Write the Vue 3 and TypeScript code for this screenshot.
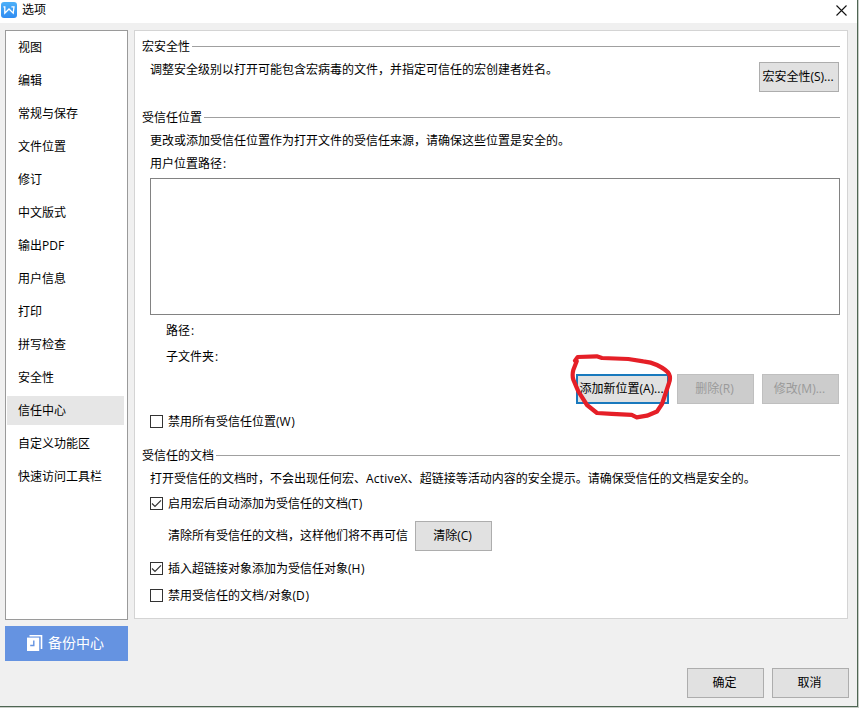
<script setup lang="ts">
import { ref } from 'vue'

const categories: string[] = [
  '视图', '编辑', '常规与保存', '文件位置', '修订', '中文版式', '输出PDF',
  '用户信息', '打印', '拼写检查', '安全性', '信任中心', '自定义功能区', '快速访问工具栏',
]
const active = ref('信任中心')
const disableLocations = ref(false)
const autoTrust = ref(true)
const trustLinks = ref(true)
const disableDocs = ref(false)
</script>

<template>
  <div class="window">
    <header class="titlebar">
      <svg class="logo" viewBox="0 0 16 16">
        <defs>
          <linearGradient id="logo-fill" x1="0" y1="0" x2="0" y2="1">
            <stop offset="0" stop-color="#4db0f8" />
            <stop offset="1" stop-color="#2f8cf2" />
          </linearGradient>
        </defs>
        <rect width="16" height="16" rx="3" fill="url(#logo-fill)" />
        <path d="M2.4 4.8H3.8V11.2L8 7L12.2 11.2L13 4.8H10.4" fill="none" stroke="#fff" stroke-width="1.3" />
      </svg>
      <span class="title">选项</span>
      <svg class="close" viewBox="0 0 11 11"><path d="M.5 .5L10.5 10.5M10.5 .5L.5 10.5" fill="none" stroke="#111" stroke-width="1.1" /></svg>
    </header>

    <div class="body">
      <aside class="side">
        <nav class="categories">
          <div
            v-for="c in categories"
            :key="c"
            class="category"
            :class="{ active: c === active }"
            @click="active = c"
          >{{ c }}</div>
        </nav>
        <button class="backup">
          <svg class="backup-icon" viewBox="0 0 16 16">
            <path d="M2.5 .8H14.5V14" fill="none" stroke="#fff" stroke-width="1.6" />
            <path d="M0 2.6H12.2V16H0Z" fill="#fff" />
            <path d="M6.8 5.5V10.5H3.2" fill="none" stroke="#6593e1" stroke-width="1.4" />
          </svg>
          <span>备份中心</span>
        </button>
      </aside>

      <main class="panel">
        <div class="heading">宏安全性</div>
        <div class="macro">
          <span class="text">调整安全级别以打开可能包含宏病毒的文件，并指定可信任的宏创建者姓名。</span>
          <button class="btn wide">宏安全性(S)...</button>
        </div>

        <div class="heading locations">受信任位置</div>
        <div class="text locations-desc">更改或添加受信任位置作为打开文件的受信任来源，请确保这些位置是安全的。</div>
        <div class="text list-label">用户位置路径<span class="colon">:</span></div>
        <div class="listbox"></div>
        <div class="text path">路径<span class="colon">:</span></div>
        <div class="text subfolder">子文件夹<span class="colon">:</span></div>
        <div class="actions">
          <div class="marked">
            <button class="btn primary">添加新位置(A)...</button>
            <svg class="scribble" viewBox="0 0 110 72">
              <path d="M5 10.7L7.7 7L26.7 6.3L32 8L58.3 9L73.3 11.3Q81 12 87 15Q97 20 99 24Q101 28 99 33L96.7 40L92 54L87 61.5L77 65.7L66.7 67.3L61.7 64.9L41.7 63.9L27 63L17 55L8.3 41.3L3.3 29.7Q2 25 3.3 20L6.7 11.3" />
            </svg>
          </div>
          <button class="btn" disabled>删除(R)</button>
          <button class="btn" disabled>修改(M)...</button>
        </div>
        <label class="check c1">
          <input v-model="disableLocations" type="checkbox">
          <span class="box"><svg v-if="disableLocations" viewBox="0 0 11 11"><path d="M1 5.5L4 8.5L10 2.3" /></svg></span>
          <span>禁用所有受信任位置(<span class="key">W</span>)</span>
        </label>

        <div class="heading docs">受信任的文档</div>
        <div class="text docs-desc">打开受信任的文档时，不会出现任何宏、<span class="latin">ActiveX</span>、超链接等活动内容的安全提示。请确保受信任的文档是安全的。</div>
        <label class="check c2">
          <input v-model="autoTrust" type="checkbox">
          <span class="box"><svg v-if="autoTrust" viewBox="0 0 11 11"><path d="M1 5.5L4 8.5L10 2.3" /></svg></span>
          <span>启用宏后自动添加为受信任的文档(<span class="key">T</span>)</span>
        </label>
        <div class="clear">
          <span>清除所有受信任的文档，这样他们将不再可信</span>
          <button class="btn">清除(C)</button>
        </div>
        <label class="check c3">
          <input v-model="trustLinks" type="checkbox">
          <span class="box"><svg v-if="trustLinks" viewBox="0 0 11 11"><path d="M1 5.5L4 8.5L10 2.3" /></svg></span>
          <span>插入超链接对象添加为受信任对象(<span class="key">H</span>)</span>
        </label>
        <label class="check c4">
          <input v-model="disableDocs" type="checkbox">
          <span class="box"><svg v-if="disableDocs" viewBox="0 0 11 11"><path d="M1 5.5L4 8.5L10 2.3" /></svg></span>
          <span>禁用受信任的文档/对象(<span class="key">D</span>)</span>
        </label>
      </main>
    </div>

    <footer class="footer">
      <button class="btn">确定</button>
      <button class="btn">取消</button>
    </footer>
  </div>
</template>

<style>
body {
  background: #c8cdc8;
  overflow: hidden;
}
</style>

<style scoped>
.window {
  box-sizing: border-box;
  width: 858px;
  height: 707px;
  display: flex;
  flex-direction: column;
  background: #f0f0f0;
  border-right: 1px solid #4f6653;
  border-bottom: 1px solid #4f6653;
  font: 12px/16px "Open Sans", "Noto Sans CJK SC", sans-serif;
  color: #000;
  white-space: nowrap;
}
.titlebar {
  display: flex;
  align-items: center;
  height: 23px;
  padding: 0 10px 0 1px;
  background: #fff;
}
.logo {
  width: 16px;
  height: 16px;
  margin-top: -3px;
}
.title {
  margin: -4px 0 0 5px;
}
.close {
  width: 11px;
  height: 11px;
  margin: -3px 0 0 auto;
}
.body {
  display: flex;
  gap: 6px;
  padding: 7px 9px 0 5px;
}
.side {
  width: 123px;
  display: flex;
  flex-direction: column;
  gap: 6px;
}
.categories {
  box-sizing: border-box;
  height: 590px;
  padding: 2px 3px 0 1px;
  border: 1px solid #9a9a9a;
  background: #fff;
}
.category {
  height: 29px;
  margin-bottom: 4px;
  padding-left: 11px;
  line-height: 30px;
}
.category.active {
  background: #e6e6e6;
}
.backup {
  display: flex;
  align-items: center;
  justify-content: center;
  gap: 5px;
  height: 35px;
  padding: 0 2px 1px 0;
  border: 0;
  background: #6593e1;
  color: #fff;
  font: 14px/20px "Open Sans", "Noto Sans CJK SC", sans-serif;
}
.backup-icon {
  width: 16px;
  height: 16px;
}
.panel {
  box-sizing: border-box;
  flex: 1;
  height: 589px;
  padding: 7px 7px 0;
  border: 1px solid #d4d4d4;
  background: #fff;
}
.heading {
  display: flex;
  align-items: center;
  gap: 2px;
  height: 17px;
}
.heading::after {
  content: "";
  flex: 1;
  height: 1px;
  background: #a0a0a0;
}
.text {
  height: 16px;
  padding-left: 8px;
}
.latin {
  letter-spacing: 0.2px;
}
.key {
  letter-spacing: 0.7px;
}
.colon {
  margin-left: 1px;
}
.macro {
  display: flex;
  justify-content: space-between;
  margin-top: 7px;
  padding-right: 1px;
}
.locations {
  margin-top: 17px;
}
.locations-desc {
  margin-top: 7px;
}
.list-label {
  margin-top: 7px;
}
.listbox {
  box-sizing: border-box;
  height: 137px;
  margin: 6px 0 0 8px;
  border: 1px solid #828282;
}
.path {
  margin-top: 8px;
  padding-left: 24px;
}
.subfolder {
  margin-top: 10px;
  padding-left: 24px;
}
.actions {
  display: flex;
  justify-content: flex-end;
  gap: 8px;
  margin-top: 9px;
  padding-right: 1px;
}
.marked {
  position: relative;
}
.scribble {
  position: absolute;
  left: -6px;
  top: -24px;
  width: 110px;
  height: 72px;
  pointer-events: none;
}
.scribble path {
  fill: none;
  stroke: #e51f27;
  stroke-width: 4.2;
  stroke-linecap: round;
  stroke-linejoin: round;
}
.btn {
  box-sizing: border-box;
  width: 77px;
  height: 30px;
  padding: 0 2px 1px 0;
  border: 1px solid #adadad;
  background: #e1e1e1;
  color: #000;
  font: inherit;
}
.btn.wide {
  width: 80px;
}
.btn.primary {
  width: 93px;
  border: 2px solid #1979bd;
}
.btn:disabled {
  border-color: #bfbfbf;
  background: #ccc;
  color: #9a9a9a;
}
.check {
  display: flex;
  align-items: center;
  gap: 5px;
  height: 17px;
  padding-left: 8px;
}
.check input {
  display: none;
}
.box {
  box-sizing: border-box;
  width: 13px;
  height: 13px;
  border: 1px solid #333;
}
.box svg {
  display: block;
  width: 11px;
  height: 11px;
}
.box path {
  fill: none;
  stroke: #333;
  stroke-width: 1.2;
}
.c1 {
  margin-top: 9px;
}
.docs {
  margin-top: 17px;
}
.docs-desc {
  margin-top: 7px;
}
.c2 {
  margin-top: 8px;
}
.clear {
  display: flex;
  align-items: center;
  gap: 7px;
  margin-top: 9px;
  padding-left: 26px;
}
.c3 {
  margin-top: 9px;
}
.c4 {
  margin-top: 10px;
}
.footer {
  display: flex;
  justify-content: flex-end;
  gap: 8px;
  margin-top: 7px;
  padding-right: 8px;
}
</style>
